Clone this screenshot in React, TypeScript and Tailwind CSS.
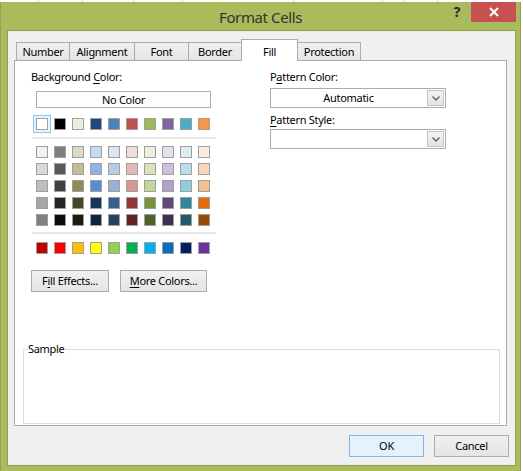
import clsx from "clsx";

const themeTop = ["#FFFFFF", "#000000", "#EEECE1", "#1F497D", "#4F81BD", "#C0504D", "#9BBB59", "#8064A2", "#4BACC6", "#F79646"];

const themeShades = [
  ["#F2F2F2", "#7F7F7F", "#DDD9C4", "#C5D9F1", "#DCE6F1", "#F2DCDB", "#EBF1DE", "#E4DFEC", "#DAEEF3", "#FDE9D9"],
  ["#D9D9D9", "#595959", "#C4BD97", "#8DB4E2", "#B8CCE4", "#E6B8B7", "#D8E4BC", "#CCC0DA", "#B7DEE8", "#FCD5B4"],
  ["#BFBFBF", "#404040", "#948A54", "#538DD5", "#95B3D7", "#DA9694", "#C4D79B", "#B1A0C7", "#92CDDC", "#FABF8F"],
  ["#A6A6A6", "#262626", "#494529", "#16365C", "#366092", "#963634", "#76933C", "#60497A", "#31869B", "#E26B0A"],
  ["#808080", "#0D0D0D", "#1D1B10", "#0F243E", "#244062", "#632523", "#4F6228", "#403151", "#215967", "#974706"],
];

const standard = ["#C00000", "#FF0000", "#FFC000", "#FFFF00", "#92D050", "#00B050", "#00B0F0", "#0070C0", "#002060", "#7030A0"];

function Swatch({ color, selected }: { color: string; selected?: boolean }) {
  return (
    <div
      className={clsx(
        "h-3 w-3 border border-[#9f9f9f]",
        selected && "shadow-[0_0_0_2px_#e5f3fb,0_0_0_3px_#8cc4f2]"
      )}
      style={{ backgroundColor: color }}
    />
  );
}

function SwatchRow({ colors, first }: { colors: string[]; first?: boolean }) {
  return (
    <div className="flex gap-[6px]">
      {colors.map((c, i) => (
        <Swatch key={i} color={c} selected={first && i === 0} />
      ))}
    </div>
  );
}

function Chevron() {
  return (
    <svg width="8" height="5" viewBox="0 0 8 5">
      <path d="M0.5 0.5 L4 4 L7.5 0.5" fill="none" stroke="#606060" strokeWidth="1.4" />
    </svg>
  );
}

function Combo({ value }: { value?: string }) {
  return (
    <div className="flex h-[20px] w-[176px] border border-[#acacac] bg-white">
      <div className="flex flex-1 items-center justify-center text-black">{value}</div>
      <div className="m-px flex w-[17px] items-center justify-center border border-[#c5c5c5] bg-gradient-to-b from-[#f3f3f3] to-[#e4e4e4]">
        <Chevron />
      </div>
    </div>
  );
}

function Btn({ children, w, primary }: { children: React.ReactNode; w: string; primary?: boolean }) {
  return (
    <button
      className={clsx(
        "flex h-[22px] items-center justify-center border text-black",
        w,
        primary
          ? "border-[#7eb4ea] bg-[#e5f1fb]"
          : "border-[#acacac] bg-gradient-to-b from-[#f0f0f0] to-[#e5e5e5]"
      )}
    >
      {children}
    </button>
  );
}

const tabs = [
  { label: "Number", w: "w-[54px]" },
  { label: "Alignment", w: "w-[66px]" },
  { label: "Font", w: "w-[55px]" },
  { label: "Border", w: "w-[54px]" },
  { label: "Fill", w: "w-[57px]", active: true },
  { label: "Protection", w: "w-[64px]" },
];

export default function App() {
  return (
    <div className="h-[471px] w-[523px] overflow-hidden bg-white font-['Segoe_UI','Noto_Sans',sans-serif] text-[11px] leading-[14px] tracking-[-0.3px]">
      {/* sheet behind the dialog */}
      <div className="flex h-[2px]">
        <div className="w-[39px] border-r border-[#d4d4d4]" />
        <div className="w-[44px] border-r border-[#d4d4d4]" />
        <div className="w-[51px] border-r border-[#d4d4d4]" />
        <div className="w-[49px] border-r border-[#d4d4d4]" />
        <div className="w-[111px] border-r border-[#d4d4d4]" />
        <div className="w-[89px] border-r border-[#d4d4d4]" />
        <div className="w-[22px] border-r border-[#d4d4d4]" />
        <div className="w-[33px] border-r border-[#d4d4d4]" />
      </div>

      <div className="h-[469px] w-[521px] overflow-hidden border-x border-[#93a54b] bg-[#aabb5c]">
        {/* title bar */}
        <div className="grid h-[28px] grid-cols-[1fr_auto_1fr]">
          <div />
          <div className="flex items-center pt-[1px] text-[15px] tracking-[-0.4px] text-[#333333]">Format Cells</div>
          <div className="flex items-start justify-end pr-[4px]">
            <div className="flex h-[20px] w-[28px] items-center justify-center text-[14px] font-bold text-[#2a2a2a]">?</div>
            <div className="flex h-[20px] w-[45px] items-center justify-center bg-[#c75050]">
              <svg width="10" height="10" viewBox="0 0 10 10">
                <path d="M1 1 L9 9 M9 1 L1 9" stroke="white" strokeWidth="2" />
              </svg>
            </div>
          </div>
        </div>

        {/* client area */}
        <div className="ml-[6px] h-[436px] w-[509px] border border-[#8e9f49] bg-[#f0f0f0]">
          {/* tabs */}
          <div className="relative z-10 ml-[8px] mt-[8px] flex h-[21px] items-end">
            {tabs.map((t) =>
              t.active ? (
                <div
                  key={t.label}
                  className={clsx(
                    "-mb-px -ml-px flex h-[22px] items-start justify-center border-x border-t border-[#acacac] bg-white pt-[5px] text-black",
                    t.w
                  )}
                >
                  {t.label}
                </div>
              ) : (
                <div
                  key={t.label}
                  className={clsx(
                    "-ml-px flex h-[18px] items-center justify-center border-x border-t border-[#acacac] bg-gradient-to-b from-[#f0f0f0] to-[#e5e5e5] text-black first:ml-0",
                    t.w
                  )}
                >
                  {t.label}
                </div>
              )
            )}
          </div>

          {/* tab page */}
          <div className="ml-[6px] h-[366px] w-[493px] border border-[#acacac] bg-white">
            <div className="flex pl-[16px] pt-[9px]">
              {/* background colour */}
              <div className="flex w-[239px] flex-col">
                <div className="text-black">
                  Background <u className="underline-offset-2">C</u>olor:
                </div>
                <div className="ml-[5px] mt-[7px] flex h-[17px] w-[175px] items-center justify-center border border-[#adadad] bg-[#fdfdfd] text-black">
                  No Color
                </div>
                <div className="ml-[5px] mt-[10px]">
                  <SwatchRow colors={themeTop} first />
                </div>
                <div className="ml-[1px] mt-[7px] h-[2px] w-[184px] bg-[#e6e6e6]" />
                <div className="ml-[5px] mt-[7px] flex flex-col gap-[5px]">
                  {themeShades.map((row, i) => (
                    <SwatchRow key={i} colors={row} />
                  ))}
                </div>
                <div className="ml-[1px] mt-[6px] h-[2px] w-[184px] bg-[#e6e6e6]" />
                <div className="ml-[5px] mt-[8px]">
                  <SwatchRow colors={standard} />
                </div>
                <div className="mt-[16px] flex gap-[11px]">
                  <Btn w="w-[78px]">
                    F<u className="underline-offset-2">i</u>ll Effects...
                  </Btn>
                  <Btn w="w-[87px]">
                    <u className="underline-offset-2">M</u>ore Colors...
                  </Btn>
                </div>
              </div>

              {/* pattern */}
              <div className="flex flex-col">
                <div className="text-black">
                  P<u className="underline-offset-2">a</u>ttern Color:
                </div>
                <div className="mt-[4px]">
                  <Combo value="Automatic" />
                </div>
                <div className="mt-[5px] text-black">
                  <u className="underline-offset-2">P</u>attern Style:
                </div>
                <div className="mt-[2px]">
                  <Combo />
                </div>
              </div>
            </div>

            <fieldset className="ml-[8px] mt-[50px] h-[82px] w-[477px] border border-[#dcdcdc]">
              <legend className="ml-[4px] text-black">Sample</legend>
            </fieldset>
          </div>

          {/* dialog buttons */}
          <div className="mt-[9px] flex justify-end gap-[10px] pr-[6px]">
            <Btn w="w-[75px]" primary>
              OK
            </Btn>
            <Btn w="w-[75px]">Cancel</Btn>
          </div>
        </div>
      </div>
    </div>
  );
}
